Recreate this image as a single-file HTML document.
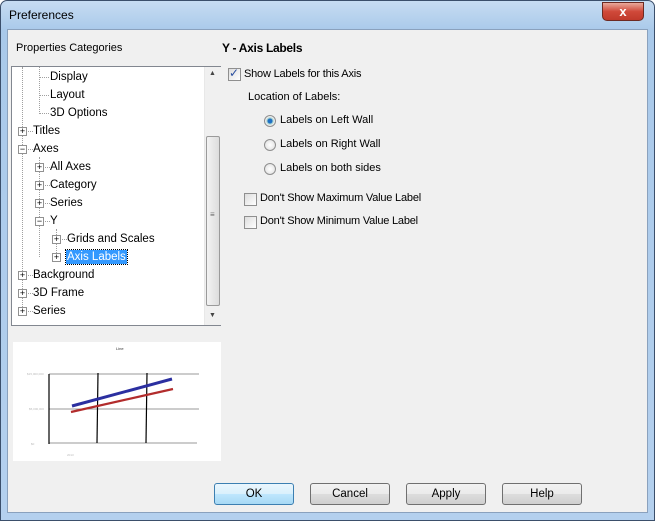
<!DOCTYPE html>
<html><head><style>
*{margin:0;padding:0;box-sizing:border-box}
body{width:655px;height:521px;overflow:hidden;font-family:"Liberation Sans",sans-serif;font-size:11px;color:#000;position:relative;background:#fff}
.win{position:absolute;left:0;top:0;width:655px;height:521px;border:1px solid #3b4f6b;border-radius:7px 7px 0 0;background:linear-gradient(#c7dcf2,#a9c9ea 30px,#b4d0ee);}
.title{position:absolute;left:8px;top:7px;font-size:12px;color:#000}
.close{position:absolute;left:601px;top:1px;width:42px;height:19px;border:1px solid #6d2a22;border-radius:0 0 5px 5px;background:linear-gradient(#e9a99b,#d0493a 50%,#c0392b);color:#fff;font-weight:bold;text-align:center;font-size:13px;line-height:17px}
.client{position:absolute;left:7px;top:29px;width:641px;height:484px;background:#f0f0f0;border:1px solid #8aa1bd}
.a{position:absolute;white-space:nowrap}
.tree{position:absolute;left:11px;top:66px;width:210px;height:260px;background:#fff;border:1px solid #828790}
.sb{position:absolute;left:192px;top:0;width:17px;height:258px;background:#f0f0f0;border-left:1px solid #e8e8e8}
.thumb{position:absolute;left:1px;top:69px;width:14px;height:170px;border:1px solid #9a9a9a;border-radius:2px;background:linear-gradient(90deg,#f3f3f3,#dcdcdc)}
.pb{position:absolute;width:9px;height:9px;border:1px solid #919191;background:#fff;font-size:9px;line-height:6px;text-align:center;color:#000}
.t{position:absolute;font-size:11.5px;line-height:14px;white-space:nowrap}
.dh{position:absolute;border-top:1px dotted #a0a0a0;height:0}
.dv{position:absolute;border-left:1px dotted #a0a0a0;width:0}
.cb{position:absolute;width:13px;height:13px;border:1px solid #8f8f8f;background:linear-gradient(135deg,#ddd,#fff)}
.rb{position:absolute;width:12px;height:12px;border:1px solid #8f8f8f;border-radius:50%;background:radial-gradient(#fff,#ddd)}
.btn{position:absolute;top:483px;width:80px;height:22px;border:1px solid #707070;border-radius:3px;background:linear-gradient(#f2f2f2,#ebebeb 50%,#dddddd 51%,#cfcfcf);text-align:center;line-height:20px;font-size:11.5px}
</style></head><body>
<div class="win">
<div class="title">Preferences</div>
<div class="close">x</div>
</div>
<div class="client"></div>
<div class="a" style="left:16px;top:42px">Properties Categories</div>
<div class="a" style="left:222px;top:41px;font-weight:bold;font-size:12px;letter-spacing:-0.3px">Y - Axis Labels</div>

<div class="tree">
<div class="dv" style="left:10px;top:0;height:244px"></div>
<div class="dv" style="left:27px;top:0;height:47px"></div>
<div class="dv" style="left:27px;top:90px;height:100px"></div>
<div class="dv" style="left:44px;top:162px;height:28px"></div>
<div class="dh" style="left:28px;top:10px;width:9px"></div>
<div class="dh" style="left:28px;top:28px;width:9px"></div>
<div class="dh" style="left:28px;top:46px;width:9px"></div>
<div class="t" style="left:38px;top:3px">Display</div>
<div class="t" style="left:38px;top:21px">Layout</div>
<div class="t" style="left:38px;top:39px">3D Options</div>
<div class="pb" style="left:6px;top:60px">+</div><div class="dh" style="left:16px;top:64px;width:5px"></div><div class="t" style="left:21px;top:57px">Titles</div>
<div class="pb" style="left:6px;top:78px">−</div><div class="dh" style="left:16px;top:82px;width:5px"></div><div class="t" style="left:21px;top:75px">Axes</div>
<div class="pb" style="left:23px;top:96px">+</div><div class="dh" style="left:33px;top:100px;width:5px"></div><div class="t" style="left:38px;top:93px">All Axes</div>
<div class="pb" style="left:23px;top:114px">+</div><div class="dh" style="left:33px;top:118px;width:5px"></div><div class="t" style="left:38px;top:111px">Category</div>
<div class="pb" style="left:23px;top:132px">+</div><div class="dh" style="left:33px;top:136px;width:5px"></div><div class="t" style="left:38px;top:129px">Series</div>
<div class="pb" style="left:23px;top:150px">−</div><div class="dh" style="left:33px;top:154px;width:5px"></div><div class="t" style="left:38px;top:147px">Y</div>
<div class="pb" style="left:40px;top:168px">+</div><div class="dh" style="left:50px;top:172px;width:5px"></div><div class="t" style="left:55px;top:165px">Grids and Scales</div>
<div class="pb" style="left:40px;top:186px">+</div>
<div class="t" style="left:54px;top:183px;background:#3399ff;color:#fff;padding:0 1px;outline:1px dotted #000">Axis Labels</div>
<div class="pb" style="left:6px;top:204px">+</div><div class="dh" style="left:16px;top:208px;width:5px"></div><div class="t" style="left:21px;top:201px">Background</div>
<div class="pb" style="left:6px;top:222px">+</div><div class="dh" style="left:16px;top:226px;width:5px"></div><div class="t" style="left:21px;top:219px">3D Frame</div>
<div class="pb" style="left:6px;top:240px">+</div><div class="dh" style="left:16px;top:244px;width:5px"></div><div class="t" style="left:21px;top:237px">Series</div>
<div class="sb"><div class="a" style="left:4px;top:3px;font-size:7px;color:#444">▲</div><div class="thumb"><div class="a" style="left:3px;top:76px;font-size:8px;color:#666;line-height:3px">≡</div></div><div class="a" style="left:4px;top:245px;font-size:7px;color:#444">▼</div></div>
</div>

<svg style="position:absolute;left:13px;top:342px" width="208" height="119">
<rect width="208" height="119" fill="#fff"/>
<text x="103" y="8" font-size="4" fill="#333" font-family="Liberation Sans">Line</text>
<g stroke="#777" stroke-width="0.8"><line x1="36" y1="32" x2="186" y2="32"/><line x1="36" y1="67" x2="186" y2="67"/><line x1="36" y1="101" x2="184" y2="101"/></g>
<g stroke="#000" stroke-width="1.2"><line x1="36" y1="32" x2="36" y2="102"/><line x1="85" y1="31" x2="84" y2="101"/><line x1="134" y1="31" x2="133" y2="101"/></g>
<line x1="59" y1="64" x2="159" y2="37" stroke="#2b2fa0" stroke-width="3"/>
<line x1="58" y1="70" x2="160" y2="47" stroke="#b22c2c" stroke-width="2.2"/>
<g fill="#bbb" font-size="3" font-family="Liberation Sans"><text x="14" y="33">$15,000,000</text><text x="16" y="68">$5,000,000</text><text x="18" y="103">$0</text><text x="54" y="114">2013</text></g>
</svg>

<div class="cb" style="left:228px;top:68px"></div><div class="a" style="left:229px;top:66px;color:#2a4fa0;font-size:12px">✓</div>
<div class="a" style="left:244px;top:68px;letter-spacing:-0.2px">Show Labels for this Axis</div>
<div class="a" style="left:248px;top:91px">Location of Labels:</div>
<div class="rb" style="left:264px;top:115px;background:radial-gradient(#1e6fc4 30%,#9cc 40%,#eee 60%)"></div><div class="a" style="left:280px;top:114px">Labels on Left Wall</div>
<div class="rb" style="left:264px;top:139px"></div><div class="a" style="left:280px;top:138px">Labels on Right Wall</div>
<div class="rb" style="left:264px;top:163px"></div><div class="a" style="left:280px;top:162px">Labels on both sides</div>
<div class="cb" style="left:244px;top:193px"></div><div class="a" style="left:260px;top:192px;letter-spacing:-0.2px">Don't Show Maximum Value Label</div>
<div class="cb" style="left:244px;top:216px"></div><div class="a" style="left:260px;top:215px;letter-spacing:-0.2px">Don't Show Minimum Value Label</div>

<div class="btn" style="left:214px;border-color:#3c7fb1;background:linear-gradient(#eaf6fd,#d9f0fc 50%,#bee6fd 51%,#a7d9f5)">OK</div>
<div class="btn" style="left:310px">Cancel</div>
<div class="btn" style="left:406px">Apply</div>
<div class="btn" style="left:502px">Help</div>
</body></html>
